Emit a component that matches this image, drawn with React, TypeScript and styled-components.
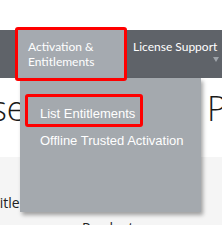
import React from "react";
import styled, { createGlobalStyle } from "styled-components";

const GlobalStyle = createGlobalStyle`
  html, body {
    margin: 0;
    padding: 0;
    background: #ffffff;
    overflow: hidden;
  }
`;

const Page = styled.div`
  width: 222px;
  height: 225px;
  overflow: hidden;
  display: flex;
  flex-direction: column;
`;

const TopStrip = styled.div`
  height: 30px;
  background: #ffffff;
  flex-shrink: 0;
`;

const NavBar = styled.nav`
  height: 48px;
  flex-shrink: 0;
  background: #5f6369;
  display: flex;
  padding-left: 18px;
  position: relative;
  z-index: 2;
`;

const NavItem = styled.div<{ $active?: boolean; $marked?: boolean }>`
  position: relative;
  flex-shrink: 0;
  box-sizing: border-box;
  height: 48px;
  padding: 9px ${(p) => (p.$active ? "10px" : "0")} 0
    ${(p) => (p.$active ? "10px" : "9px")};
  width: ${(p) => (p.$active ? "106px" : "auto")};
  background: ${(p) => (p.$active ? "#a5aab0" : "transparent")};
  color: #ffffff;
  font-family: Lato, "Open Sans", sans-serif;
  font-size: 12px;
  line-height: 15px;
  white-space: nowrap;
  display: flex;
  flex-direction: column;

  ${(p) =>
    p.$marked &&
    `
    &::after {
      content: "";
      position: absolute;
      top: -3px;
      left: -3px;
      right: -3px;
      bottom: -3px;
      border: 3px solid #ff0000;
      border-radius: 3px;
      z-index: 5;
      pointer-events: none;
    }
  `}
`;

const Caret = styled.span`
  align-self: flex-end;
  margin-top: 3px;
  margin-right: -2px;
  width: 0;
  height: 0;
  border-left: 3.5px solid transparent;
  border-right: 3.5px solid transparent;
  border-top: 5px solid #9ea3a9;
`;

const Dropdown = styled.div`
  position: absolute;
  top: 48px;
  left: 2px;
  width: 181px;
  height: 134px;
  box-sizing: border-box;
  padding-top: 22px;
  background: #a4a9ae;
  box-shadow: 2px 3px 4px rgba(0, 0, 0, 0.35);
  z-index: 3;
`;

const DropItem = styled.div<{ $marked?: boolean }>`
  position: relative;
  padding: 0 20px;
  font-family: "Liberation Sans", Arial, sans-serif;
  font-size: 13px;
  line-height: 27px;
  color: #ffffff;
  white-space: nowrap;

  ${(p) =>
    p.$marked &&
    `
    &::after {
      content: "";
      position: absolute;
      left: 5px;
      top: -6px;
      width: 118px;
      height: 33px;
      box-sizing: border-box;
      border: 3px solid #ff0000;
      border-radius: 3px;
      pointer-events: none;
    }
  `}
`;

const HeadingRow = styled.div`
  height: 79px;
  flex-shrink: 0;
  box-sizing: border-box;
  padding-top: 7px;
  display: flex;
  justify-content: space-between;
  font-family: "Open Sans", sans-serif;
  font-weight: 300;
  font-size: 34px;
  line-height: 46px;
  color: #1a1a1a;
  white-space: nowrap;
`;

const HeadLeft = styled.span`
  margin-left: -9px;
`;

const HeadRight = styled.span`
  margin-right: -5px;
`;

const Content = styled.div`
  flex: 1;
  background: #f5f5f5;
  padding-top: 36px;
  font-family: "Open Sans", sans-serif;
  font-size: 14px;
  line-height: 20px;
  color: #222222;
`;

const FieldRow = styled.div<{ $indent: number; $gap?: number }>`
  margin-left: ${(p) => p.$indent}px;
  margin-top: ${(p) => p.$gap ?? 0}px;
  white-space: nowrap;
`;

export default function App() {
  return (
    <Page>
      <GlobalStyle />
      <TopStrip />
      <NavBar>
        <NavItem $active $marked>
          <span>Activation &amp;</span>
          <span>Entitlements</span>
          <Dropdown>
            <DropItem $marked>List Entitlements</DropItem>
            <DropItem>Offline Trusted Activation</DropItem>
          </Dropdown>
        </NavItem>
        <NavItem>
          <span>License Support</span>
          <Caret />
        </NavItem>
      </NavBar>
      <HeadingRow>
        <HeadLeft>se</HeadLeft>
        <HeadRight>P</HeadRight>
      </HeadingRow>
      <Content>
        <FieldRow $indent={-8}>Title</FieldRow>
        <FieldRow $indent={82} $gap={5}>
          Product
        </FieldRow>
      </Content>
    </Page>
  );
}
